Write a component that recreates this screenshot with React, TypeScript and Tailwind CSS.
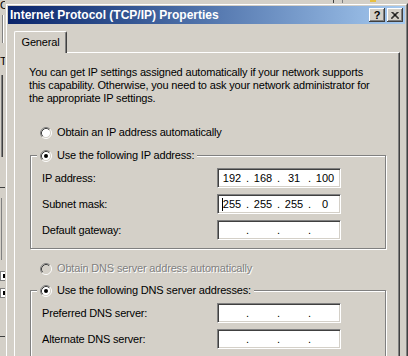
import { Fragment } from 'react';

const face = 'bg-[#d4d0c8]';

function Radio({ checked = false, disabled = false }: { checked?: boolean; disabled?: boolean }) {
  return (
    <svg width="12" height="12" viewBox="0 0 12 12" className="shrink-0">
      <circle cx="6" cy="6" r="4.5" fill={disabled ? '#d4d0c8' : '#ffffff'} />
      <path d="M2.11 9.89 A5.5 5.5 0 0 1 9.89 2.11" fill="none" stroke="#808080" strokeWidth="1" />
      <path d="M9.89 2.11 A5.5 5.5 0 0 1 2.11 9.89" fill="none" stroke="#ffffff" strokeWidth="1" />
      <path d="M2.82 9.18 A4.5 4.5 0 0 1 9.18 2.82" fill="none" stroke="#404040" strokeWidth="1" />
      <path d="M9.18 2.82 A4.5 4.5 0 0 1 2.82 9.18" fill="none" stroke="#d4d0c8" strokeWidth="1" />
      {checked && <circle cx="6" cy="6" r="2" fill="#000000" />}
    </svg>
  );
}

function IpBox({ parts, caret = false }: { parts: string[]; caret?: boolean }) {
  return (
    <div className="flex h-[20px] w-[124px] items-center border border-t-[#808080] border-l-[#808080] border-r-white border-b-white bg-white pl-[1px] tracking-normal shadow-[inset_1px_1px_#404040,inset_-1px_-1px_#d4d0c8]">
      {parts.map((p, i) => (
        <Fragment key={i}>
          <span className="w-[26px] text-center">
            <span className="relative">
              {caret && i === 0 && <span className="absolute -left-[1px] top-0 h-[13px] w-px bg-black" />}
              {p}
            </span>
          </span>
          {i < 3 && <span className="w-[5px] text-center">.</span>}
        </Fragment>
      ))}
    </div>
  );
}

function Row({ label, parts, caret }: { label: string; parts: string[]; caret?: boolean }) {
  return (
    <div className="flex items-center pl-[11px]">
      <span className="w-[175px]">{label}</span>
      <IpBox parts={parts} caret={caret} />
    </div>
  );
}

function Group({ legend, children }: { legend: string; children: React.ReactNode }) {
  return (
    <div className="ml-[1px] w-[356px] border border-[#808080] pb-[8px] shadow-[inset_1px_1px_#fff,1px_1px_#fff]">
      <div className={`-mt-[7px] ml-[6px] flex h-[13px] w-fit items-center gap-[5px] ${face} pl-[3px] pr-[3px]`}>
        <Radio checked />
        <span>{legend}</span>
      </div>
      <div className="mt-[6px] flex flex-col gap-[6px]">{children}</div>
    </div>
  );
}

function RadioRow({ label, disabled }: { label: string; disabled?: boolean }) {
  return (
    <div className="ml-[11px] flex h-[13px] items-center gap-[5px]">
      <Radio disabled={disabled} />
      <span className={disabled ? 'text-[#808080] [text-shadow:1px_1px_0_#fff]' : ''}>{label}</span>
    </div>
  );
}

// strip of the window that sits behind the dialog
function BackWindow() {
  return (
    <div className="flex w-[5px] shrink-0 flex-col">
      <span className="h-[12px] overflow-hidden text-[11px] leading-[10px]">C</span>
      <div className="mt-[3px] ml-[2px] h-[28px] w-[2px] border-l border-[#808080] border-r border-r-white" />
      <span className="mt-[12px] h-[12px] text-[11px] leading-[12px]">T</span>
      <div className="mt-[8px] ml-[1px] h-[82px] w-[2px] border-l border-[#808080] border-r border-r-[#404040]" />
      <div className="mt-[30px] h-px w-[5px] bg-[#404040]" />
      <div className="mt-[10px] ml-[1px] h-[62px] w-px bg-[#808080]" />
      <div className="mt-[11px] flex h-[10px] w-[5px] items-center border-y border-l border-[#808080] bg-white pl-[2px]">
        <div className="h-[4px] w-[2px] bg-black" />
      </div>
      <div className="mt-[7px] flex h-[10px] w-[5px] items-center border-y border-l border-[#808080] bg-white pl-[2px]">
        <div className="h-[4px] w-[2px] bg-black" />
      </div>
      <div className="mt-[38px] h-px w-[5px] bg-[#404040]" />
    </div>
  );
}

const blank = ['', '', '', ''];

export default function App() {
  return (
    <div className={`relative flex h-[356px] w-[408px] overflow-hidden ${face} font-['Liberation_Sans',Arial,sans-serif] text-[11px] leading-[13px] tracking-[-0.17px] text-black`}>
      <BackWindow />
      <div className="absolute left-[333px] top-0 h-[3px] w-px bg-[#404040]" />
      <div className="absolute left-[342px] top-0 h-[3px] w-px bg-[#808080]" />
      <div className="absolute left-[370px] top-0 h-[2px] w-[6px] bg-[#e8c040]" />

      {/* dialog */}
      <div className="mt-[3px] h-[360px] w-[403px] shrink-0 border border-[#d4d0c8] border-r-[#404040] border-b-[#404040]">
        <div className="h-full border border-white border-r-[#808080] border-b-[#808080] p-px">
          <div className="flex h-[18px] items-center bg-gradient-to-r from-[#0a246a] to-[#a6caf0] pl-[2px] pr-[2px]">
            <span className="flex-1 text-[12px] font-bold tracking-normal text-white">Internet Protocol (TCP/IP) Properties</span>
            <div className="flex gap-[2px]">
              <div className={`flex h-[14px] w-[16px] items-center justify-center ${face} text-[11px] font-bold leading-none tracking-normal shadow-[inset_-1px_-1px_#404040,inset_1px_1px_#fff,inset_-2px_-2px_#808080]`}>
                ?
              </div>
              <div className={`flex h-[14px] w-[16px] items-center justify-center ${face} shadow-[inset_-1px_-1px_#404040,inset_1px_1px_#fff,inset_-2px_-2px_#808080]`}>
                <svg width="8" height="7" viewBox="0 0 8 7">
                  <path d="M0.5 0 L7.5 7 M1.5 0 L8 6.5 M7.5 0 L0.5 7 M6.5 0 L0 6.5" stroke="#000" strokeWidth="1" />
                </svg>
              </div>
            </div>
          </div>

          <div className="pl-[6px] pt-[7px]">
            <div className={`relative z-10 -mb-px flex h-[22px] w-[53px] items-start justify-center rounded-t-[2px] border-l border-t border-white border-r border-r-[#404040] ${face} pt-[4px] shadow-[inset_-1px_0_#808080]`}>
              General
            </div>
            <div className="h-[320px] w-[386px] border-l border-t border-white border-r border-r-[#404040] pl-[14px] pt-[13px] shadow-[inset_-1px_0_#808080]">
              <p className="whitespace-nowrap">
                You can get IP settings assigned automatically if your network supports
                <br />
                this capability. Otherwise, you need to ask your network administrator for
                <br />
                the appropriate IP settings.
              </p>

              <div className="mt-[21px]">
                <RadioRow label="Obtain an IP address automatically" />
              </div>

              <div className="mt-[16px]">
                <Group legend="Use the following IP address:">
                  <Row label="IP address:" parts={['192', '168', '31', '100']} />
                  <Row label="Subnet mask:" parts={['255', '255', '255', '0']} caret />
                  <Row label="Default gateway:" parts={blank} />
                </Group>
              </div>

              <div className="mt-[13px]">
                <RadioRow label="Obtain DNS server address automatically" disabled />
              </div>

              <div className="mt-[15px]">
                <Group legend="Use the following DNS server addresses:">
                  <Row label="Preferred DNS server:" parts={blank} />
                  <Row label="Alternate DNS server:" parts={blank} />
                </Group>
              </div>
            </div>
          </div>
        </div>
      </div>
    </div>
  );
}
